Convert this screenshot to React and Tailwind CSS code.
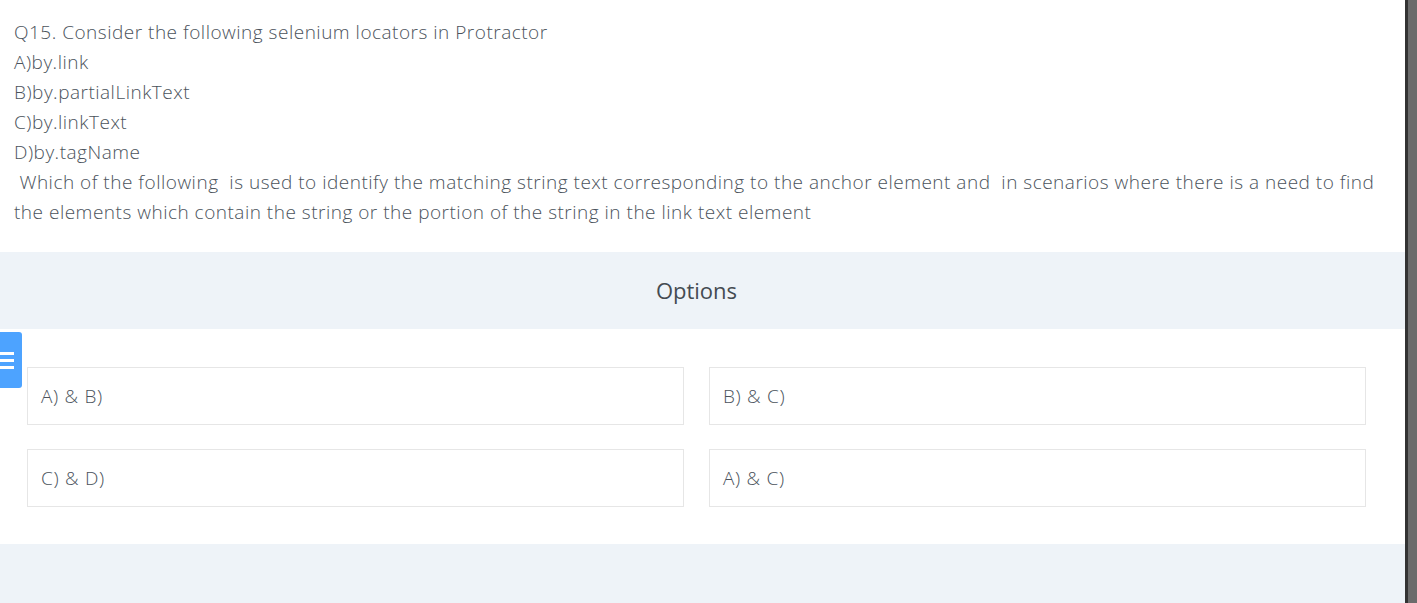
export default function App() {
  const font = { fontFamily: '"Open Sans", Lato, sans-serif' };
  return (
    <div className="flex h-[603px] w-[1417px] bg-white" style={font}>
      <div className="relative flex w-[1405px] flex-col">
        <div className="px-[14px] pt-[17px] pb-[25px] text-[19px] leading-[30px] tracking-[0.5px] font-light text-[#4b535c]">
          <div>Q15. Consider the following selenium locators in Protractor</div>
          <div>A)by.link</div>
          <div>B)by.partialLinkText</div>
          <div>C)by.linkText</div>
          <div>D)by.tagName</div>
          <div className="whitespace-pre-wrap"> Which of the following  is used to identify the matching string text corresponding to the anchor element and  in scenarios where there is a need to find the elements which contain the string or the portion of the string in the link text element</div>
        </div>
        <div className="flex h-[77px] items-center justify-center bg-[#eef3f8] pr-[12px] text-[22px] text-[#444b52]">
          Options
        </div>
        <div className="grid grid-cols-[657px_657px] gap-x-[25px] gap-y-[24px] pt-[38px] pb-[37px] pl-[27px]">
          {["A) & B)", "B) & C)", "C) & D)", "A) & C)"].map((t) => (
            <div key={t} className="flex h-[58px] items-center border border-[#e6e6e6] px-[13px] text-[19px] tracking-[0.7px] font-light text-[#4b535c]">
              {t}
            </div>
          ))}
        </div>
        <div className="flex-1 bg-[#eef3f8]" />
        <div className="absolute left-0 top-[332px] flex h-[56px] w-[22px] flex-col items-start justify-center gap-[4px] rounded-r-[3px] bg-[#4da3ff]">
          <div className="h-[3px] w-[14px] bg-white" />
          <div className="h-[3px] w-[14px] bg-white" />
          <div className="h-[3px] w-[14px] bg-white" />
        </div>
      </div>
      <div className="w-[3px] bg-[#333]" />
      <div className="flex-1 bg-[#6b6b6b]" />
    </div>
  );
}
